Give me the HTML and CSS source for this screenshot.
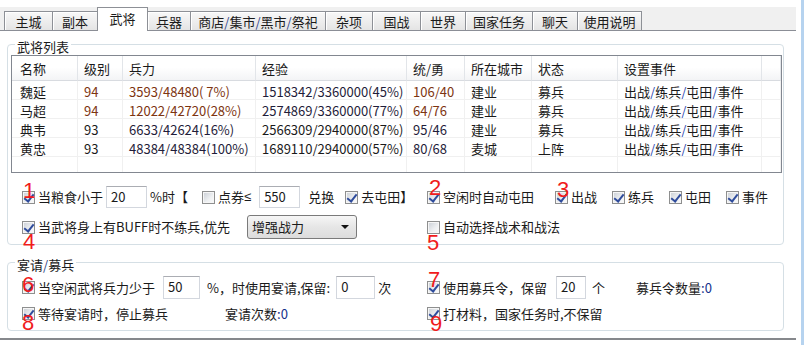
FILE: index.html
```html
<!DOCTYPE html>
<html lang="zh-CN">

<head>
    <meta charset="UTF-8">
    <title>武将</title>
    <link rel="stylesheet" href="styles.css">
</head>

<body>
    <div class="frame">
        <div class="panel">
            <ul class="tabs">
                <li>主城</li>
                <li>副本</li>
                <li class="on">武将</li>
                <li>兵器</li>
                <li>商店<i>/</i>集市<i>/</i>黑市<i>/</i>祭祀</li>
                <li>杂项</li>
                <li>国战</li>
                <li>世界</li>
                <li>国家任务</li>
                <li>聊天</li>
                <li>使用说明</li>
            </ul>

            <div class="page">
                <!-- 武将列表 -->
                <div class="group g1">
                    <div class="caption">武将列表</div>
                    <div class="list">
                        <div class="row head">
                            <span class="first">名称</span><span>级别</span><span>兵力</span><span>经验</span><span>统/勇</span><span>所在城市</span><span>状态</span><span>设置事件</span><span></span>
                        </div>
                        <div class="row hot">
                            <span class="first">魏延</span><span class="n">94</span><span class="n">3593/48480( 7%)</span><span class="x">1518342/3360000(45%)</span><span class="n">106/40</span><span>建业</span><span>募兵</span><span class="ev">出战<i>/</i>练兵<i>/</i>屯田<i>/</i>事件</span><span></span>
                        </div>
                        <div class="row hot">
                            <span class="first">马超</span><span class="n">94</span><span class="n">12022/42720(28%)</span><span class="x">2574869/3360000(77%)</span><span class="n">64/76</span><span>建业</span><span>募兵</span><span class="ev">出战<i>/</i>练兵<i>/</i>屯田<i>/</i>事件</span><span></span>
                        </div>
                        <div class="row">
                            <span class="first">典韦</span><span>93</span><span class="x">6633/42624(16%)</span><span>2566309/2940000(87%)</span><span class="x">95/46</span><span>建业</span><span>募兵</span><span class="ev">出战<i>/</i>练兵<i>/</i>屯田<i>/</i>事件</span><span></span>
                        </div>
                        <div class="row">
                            <span class="first">黄忠</span><span>93</span><span class="x">48384/48384(100%)</span><span>1689110/2940000(57%)</span><span class="x">80/68</span><span>麦城</span><span>上阵</span><span class="ev">出战<i>/</i>练兵<i>/</i>屯田<i>/</i>事件</span><span></span>
                        </div>
                        <div class="row blank">
                            <span></span><span></span><span></span><span></span><span></span><span></span><span></span><span></span><span></span>
                        </div>
                    </div>

                    <div class="opts o1">
                        <div class="cell grain">
                            <label class="chk"><span class="box on"><b class="mark m1">1</b></span>当粮食小于</label>
                            <span class="field w41">20</span>
                            <span class="pct">%时【</span>
                            <label class="chk coupon"><span class="box"></span>点券<i class="le">≤</i></label>
                            <span class="field w41 c550">550</span>
                            <span class="swap">兑换</span>
                            <label class="chk farm"><span class="box on"></span>去屯田】</label>
                        </div>
                        <div class="cell events">
                            <label class="chk idle"><span class="box on"><b class="mark m2">2</b></span>空闲时自动屯田</label>
                            <label class="chk"><span class="box on"><b class="mark m3">3</b></span>出战</label>
                            <label class="chk"><span class="box on"></span>练兵</label>
                            <label class="chk"><span class="box on"></span>屯田</label>
                            <label class="chk"><span class="box on"></span>事件</label>
                        </div>
                        <div class="cell">
                            <label class="chk"><span class="box on"><b class="mark m4">4</b></span>当武将身上有BUFF时不练兵,优先</label>
                            <span class="combo">增强战力<em></em></span>
                        </div>
                        <div class="cell">
                            <label class="chk"><span class="box"><b class="mark m5">5</b></span>自动选择战术和战法</label>
                        </div>
                    </div>
                </div>

                <!-- 宴请/募兵 -->
                <div class="group g2">
                    <div class="caption">宴请<i>/</i>募兵</div>
                    <div class="opts o2">
                        <div class="cell">
                            <label class="chk"><span class="box on"><b class="mark m6">6</b></span>当空闲武将兵力少于</label>
                            <span class="field w37">50</span>
                            <span class="feast">%，时使用宴请,保留:</span>
                            <span class="field w39">0</span>
                            <span class="times">次</span>
                        </div>
                        <div class="cell">
                            <label class="chk"><span class="box on"><b class="mark m7">7</b></span>使用募兵令，保留</label>
                            <span class="field w30">20</span>
                            <span class="unit">个</span>
                            <span class="count">募兵令数量<i>:0</i></span>
                        </div>
                        <div class="cell">
                            <label class="chk"><span class="box on"><b class="mark m8">8</b></span>等待宴请时，停止募兵</label>
                            <span class="count2">宴请次数<i>:0</i></span>
                        </div>
                        <div class="cell">
                            <label class="chk"><span class="box on"><b class="mark m9">9</b></span>打材料，国家任务时,不保留</label>
                        </div>
                    </div>
                </div>
            </div>
        </div>
    </div>
</body>

</html>
```

FILE: styles.css
```css
* {
    box-sizing: border-box;
}

body {
    margin: 0;
    background-color: #fff;
    color: #1a1a1a;
    font: 13px/1.2 "Noto Sans CJK SC", "Noto Sans CJK JP", sans-serif;
}

i {
    font-style: normal;
}

.frame {
    width: 804px;
    height: 345px;
    padding-top: 7px;
    border-right: 3px solid #b6d3ef;
}

.panel {
    width: 796px;
}

/* tabs */
.tabs {
    display: flex;
    align-items: flex-end;
    height: 24px;
    margin: 0;
    padding: 0 0 0 4px;
    list-style: none;
    background-color: #f0f0f0;
    border-bottom: 1px solid #8b8e96;
}

.tabs li {
    display: flex;
    align-items: center;
    justify-content: center;
    height: 19px;
    margin-left: -1px;
    padding-top: 2px;
    line-height: 16px;
    border: 1px solid #8d9096;
    border-bottom: 0;
    background: linear-gradient(#f8f8f8, #e4e4e4);
    box-shadow: inset 1px 1px 0 #fff;
}

.tabs li:first-child { margin-left: 0; }
.tabs li i { color: #34478e; }

.tabs li:nth-child(1) { width: 49px; }
.tabs li:nth-child(2) { width: 46px; }
.tabs li:nth-child(3) { width: 51px; }
.tabs li:nth-child(4) { width: 44px; }
.tabs li:nth-child(5) { width: 136px; }
.tabs li:nth-child(6) { width: 48px; }
.tabs li:nth-child(7) { width: 49px; }
.tabs li:nth-child(8) { width: 46px; }
.tabs li:nth-child(9) { width: 68px; }
.tabs li:nth-child(10) { width: 46px; }
.tabs li:nth-child(11) { width: 65px; }

.tabs li.on {
    position: relative;
    z-index: 1;
    height: 24px;
    margin-bottom: -1px;
    padding: 0 0 2px;
    background: #fff;
    box-shadow: none;
}

/* page */
.page {
    height: 309px;
    padding: 13px 0 0 7px;
    border-bottom: 2px solid #86888c;
}

.group {
    width: 777px;
    border: 1px solid #d5dfe5;
    border-radius: 4px;
}

.g2 {
    margin-top: 17px;
}

.caption {
    width: max-content;
    margin: -6px 0 0 7px;
    padding: 0 2px;
    line-height: 15px;
    background-color: #fff;
}

.caption i { color: #2c3f86; }

/* list view */
.list {
    width: 771px;
    height: 118px;
    margin: 1px 0 0 3px;
    border: 1px solid #828790;
    overflow: hidden;
}

.row {
    display: grid;
    grid-template-columns: 66px 45px 133px 151px 58px 67px 86px 144px 19px;
    height: 19px;
}

.row span {
    padding: 3px 0 0 6px;
    line-height: 15px;
    white-space: nowrap;
    overflow: hidden;
    border-right: 1px solid #f0f0f0;
    border-bottom: 1px solid #f0f0f0;
}

.row span.first {
    padding-left: 8px;
}

.row.head {
    height: 25px;
    background: linear-gradient(#fff 45%, #f2f3f5);
}

.row.head span {
    padding-top: 5px;
    line-height: 16px;
    border-right-color: #e2e5e9;
    border-bottom-color: #d8dbe0;
}

.row.blank {
    height: 20px;
}

.row.hot .n { color: #7d3410; }
.row .x { color: #1f1d3a; }
.ev i { color: #2b46b0; }

/* options */
.opts {
    display: grid;
    grid-template-columns: 405px auto;
    padding-left: 14px;
}

.o1 {
    grid-template-rows: 22px 24px;
    row-gap: 7px;
    padding-top: 13px;
    padding-bottom: 5px;
}

.o2 {
    grid-template-rows: 23px 17px;
    row-gap: 6px;
    padding-top: 4px;
    padding-bottom: 8px;
}

.cell {
    display: flex;
    align-items: center;
    white-space: nowrap;
}

.chk {
    display: inline-flex;
    align-items: center;
    gap: 3px;
}

.chk .le {
    margin-left: -3px;
    font-family: "Liberation Sans", sans-serif;
}

.box {
    position: relative;
    width: 13px;
    height: 13px;
    border: 1px solid #8e8f8f;
    background: linear-gradient(135deg, #c9ced5, #eef0f2 60%, #fbfbfb);
    box-shadow: inset 0 0 0 1px #f6f6f6;
}

.box.on::after {
    content: '';
    position: absolute;
    left: 3px;
    top: 0;
    width: 4px;
    height: 8px;
    border: solid #2f4c9c;
    border-width: 0 2px 2px 0;
    transform: rotate(38deg);
}

.mark {
    position: absolute;
    z-index: 2;
    font: 22px/1 "Liberation Sans", sans-serif;
    color: #f01c1c;
}

.m1 { left: 0; top: -12px; }
.m2 { left: 1px; top: -15px; }
.m3 { left: 1px; top: -13px; }
.m4 { left: 0; top: 9px; }
.m5 { left: -1px; top: 10px; }
.m6 { left: -1px; top: -8px; }
.m7 { left: 0; top: -13px; }
.m8 { left: -1px; top: 4px; }
.m9 { left: 2px; top: 5px; }

.field {
    display: flex;
    align-items: center;
    height: 100%;
    padding: 0 0 1px 4px;
    border: 1px solid #d3d7de;
    border-top-color: #abadb3;
    background-color: #fff;
}

.w41 { width: 41px; margin-left: 3px; }
.w37 { width: 37px; margin-left: 8px; }
.w39 { width: 39px; margin-left: 6px; }
.w30 { width: 30px; margin-left: 9px; }

.grain .pct { margin-left: 3px; }
.grain .coupon { margin-left: 14px; }
.grain .c550 { margin-left: 8px; }
.grain .swap { margin-left: 8px; }
.grain .farm { margin-left: 11px; }

.events { gap: 15px; }
.events .idle { margin-right: 6px; }

.combo {
    display: flex;
    align-items: center;
    width: 110px;
    height: 100%;
    margin-left: 17px;
    padding: 0 0 1px 4px;
    border: 1px solid #7a7a7a;
    border-radius: 3px;
    background: linear-gradient(#f6f6f6, #e6e6e6 50%, #dcdcdc);
}

.combo em {
    margin-left: auto;
    margin-right: 7px;
    border-top: 4px solid #111;
    border-left: 4px solid transparent;
    border-right: 4px solid transparent;
}

.feast { margin-left: 7px; }
.times { margin-left: 3px; }
.unit { margin-left: 6px; }
.count { margin-left: 31px; }
.count2 { margin-left: 57px; }
.count i,
.count2 i { color: #13308c; }
```
